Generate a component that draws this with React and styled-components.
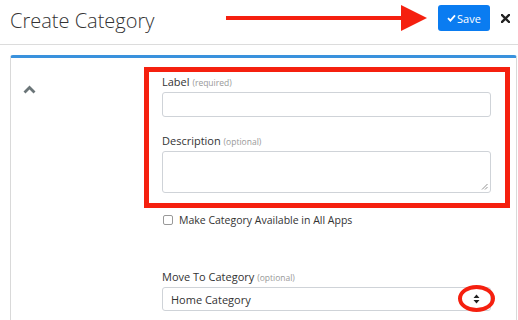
import React from "react";
import styled, { createGlobalStyle } from "styled-components";

const Global = createGlobalStyle`
  body {
    margin: 0;
    background: #fff;
    font-family: "Open Sans", "Liberation Sans", sans-serif;
    color: #333;
  }
`;

const Header = styled.header`
  height: 44px;
  display: flex;
  align-items: center;
  padding: 0 8px 0 10px;
  border-bottom: 1px solid #dcdcdc;
`;

const Title = styled.h1`
  margin: 0 0 3px;
  font-size: 20px;
  font-weight: 300;
  color: #333;
  flex: 1;
`;

const Actions = styled.div`
  display: flex;
  align-items: center;
  margin-bottom: 8px;
`;

const Arrow = styled.svg`
  display: block;
  margin-right: 10px;
`;

const SaveButton = styled.button`
  display: flex;
  align-items: center;
  gap: 1px;
  height: 26px;
  width: 52px;
  justify-content: center;
  border: none;
  border-radius: 3px;
  background: #0a7cf1;
  color: #fff;
  font-family: inherit;
  font-size: 11px;
  font-weight: 400;
  padding: 0;
`;

const Close = styled.span`
  margin-left: 11px;
  display: flex;
`;

const Card = styled.section`
  margin: 10px 1px 0 10px;
  border: 1px solid #d9d9d9;
  border-top: 3px solid #3a92dd;
  border-radius: 3px 3px 0 0;
  display: grid;
  grid-template-columns: 133px 1fr;
  height: 262px;
`;

const Side = styled.div`
  padding: 19px 0 0 12px;
`;

const Form = styled.div`
  padding: 9px 6px 0 0;
`;

const Highlight = styled.div`
  border: 5px solid #f5200f;
  padding: 3px 14px 10px 13px;
`;

const Field = styled.div`
  padding: ${(p) => (p.$plain ? "0 19px 0 18px" : "0")};
  margin-top: ${(p) => p.$top || 0}px;
  margin-bottom: ${(p) => p.$gap || 0}px;
`;

const Label = styled.div`
  font-size: 11px;
  line-height: 14px;
  color: #333;
  margin-bottom: 2px;
`;

const Hint = styled.span`
  font-size: 8.5px;
  color: #999;
`;

const Input = styled.div`
  height: 23px;
  border: 1px solid #cfd3d8;
  border-radius: 3px;
  background: #fff;
`;

const TextArea = styled.div`
  position: relative;
  height: 40px;
  border: 1px solid #cfd3d8;
  border-radius: 3px;
`;

const Grip = styled.svg`
  position: absolute;
  right: 2px;
  bottom: 2px;
`;

const CheckRow = styled.label`
  display: flex;
  align-items: center;
  gap: 6px;
  font-size: 10.5px;
  color: #333;
  padding: 4px 0 0 19px;
  height: 16px;
`;

const Box = styled.span`
  width: 8px;
  height: 8px;
  border: 1px solid #999;
  border-radius: 2px;
  background: #fff;
`;

const Select = styled.div`
  position: relative;
  height: 22px;
  border: 1px solid #cfd3d8;
  border-radius: 3px;
  display: flex;
  align-items: center;
  padding-left: 8px;
  font-size: 11px;
  color: #333;
`;

const Ring = styled.span`
  position: absolute;
  right: -5px;
  top: -3px;
  width: 29px;
  height: 19px;
  border: 4px solid #f5200f;
  border-radius: 50%;
  display: flex;
  align-items: center;
  justify-content: center;
`;

export default function App() {
  return (
    <>
      <Global />
      <Header>
        <Title>Create Category</Title>
        <Actions>
          <Arrow width="205" height="26" viewBox="0 0 205 26">
            <rect x="3" y="11" width="177" height="4" fill="#f5200f" />
            <polygon points="178,0 204,13 178,26" fill="#f5200f" />
          </Arrow>
          <SaveButton>
            <svg width="9" height="8" viewBox="0 0 9 8">
              <path d="M1 4.2 L3.4 6.6 L8 1.4" stroke="#fff" strokeWidth="1.8" fill="none" />
            </svg>
            Save
          </SaveButton>
          <Close>
            <svg width="9" height="9" viewBox="0 0 9 9">
              <path d="M1 1 L8 8 M8 1 L1 8" stroke="#222" strokeWidth="2.4" strokeLinecap="square" />
            </svg>
          </Close>
        </Actions>
      </Header>
      <Card>
        <Side>
          <svg width="13" height="9" viewBox="0 0 13 9">
            <path d="M1.5 7.5 L6.5 2.5 L11.5 7.5" stroke="#6b7578" strokeWidth="2.8" fill="none" />
          </svg>
        </Side>
        <Form>
          <Highlight>
            <Field $gap={17}>
              <Label>
                Label <Hint>(required)</Hint>
              </Label>
              <Input />
            </Field>
            <Field>
              <Label>
                Description <Hint>(optional)</Hint>
              </Label>
              <TextArea>
                <Grip width="7" height="7" viewBox="0 0 7 7">
                  <path d="M1 6.5 L6.5 1 M4 6.5 L6.5 4" stroke="#777" strokeWidth="0.8" />
                </Grip>
              </TextArea>
            </Field>
          </Highlight>
          <CheckRow>
            <Box />
            Make Category Available in All Apps
          </CheckRow>
          <Field $plain $top={42}>
            <Label>
              Move To Category <Hint>(optional)</Hint>
            </Label>
            <Select>
              Home Category
              <Ring>
                <svg width="7" height="10" viewBox="0 0 7 10">
                  <path d="M0.5 4 L3.5 0.5 L6.5 4 Z M0.5 6 L3.5 9.5 L6.5 6 Z" fill="#222" />
                </svg>
              </Ring>
            </Select>
          </Field>
        </Form>
      </Card>
    </>
  );
}
